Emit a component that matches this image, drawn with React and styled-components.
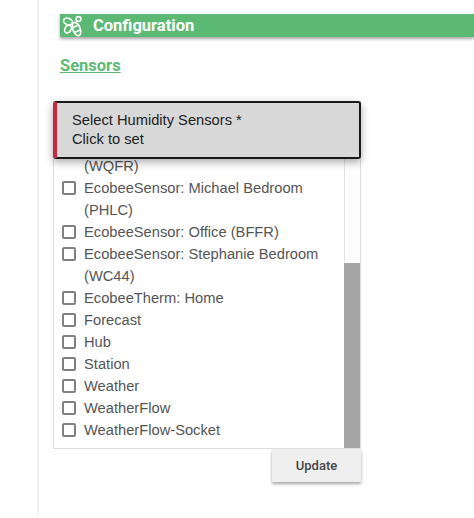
import styled, { createGlobalStyle } from "styled-components";

const GlobalStyle = createGlobalStyle`
    html, body {
        margin: 0;
        padding: 0;
        background: #fff;
    }
    body {
        font-family: "Liberation Sans", Arial, sans-serif;
    }
`;

const Page = styled.div`
    width: 474px;
    height: 518px;
    box-sizing: border-box;
    overflow: hidden;
    display: flex;
`;

const Rail = styled.div`
    width: 37px;
    flex-shrink: 0;
    height: 516px;
    border-right: 2px solid #f1f1f1;
`;

const Main = styled.div`
    flex: 1;
    min-width: 0;
    padding: 14px 0 0 14px;
    display: flex;
    flex-direction: column;
`;

const Header = styled.div`
    height: 23px;
    margin-left: 7px;
    display: flex;
    align-items: center;
    gap: 9px;
    padding-left: 2px;
    background-color: #5cb973;
    box-shadow: rgba(0, 0, 0, 0.35) 0 2px 3px;
    color: #fff;
    font-family: Roboto, sans-serif;
    font-weight: 700;
    font-size: 16.5px;
`;

const SectionLink = styled.a`
    align-self: flex-start;
    margin: 19px 0 0 7px;
    font-family: Roboto, sans-serif;
    font-weight: 700;
    font-size: 16.5px;
    line-height: 20px;
    color: #5cb973;
    text-decoration: underline;
`;

const Select = styled.div`
    position: relative;
    width: 308px;
    margin-top: 25px;
`;

const Trigger = styled.div`
    position: absolute;
    z-index: 2;
    top: 0;
    left: 0;
    right: 0;
    height: 58px;
    box-sizing: border-box;
    padding: 8px 0 0 15px;
    background-color: #d8d8d8;
    border: 2px solid #1a1a1a;
    border-left: 4px solid #c8283f;
    border-radius: 3px;
    box-shadow: rgba(0, 0, 0, 0.35) 0 3px 9px;
    font-size: 14.7px;
    line-height: 19px;
    color: #222;
`;

const List = styled.div`
    height: 348px;
    box-sizing: border-box;
    padding: 54px 0 0 8px;
    border: 1px solid #ddd;
    border-top: none;
    position: relative;
    overflow: hidden;
`;

const Scrollbar = styled.div`
    position: absolute;
    top: 0;
    right: 0;
    bottom: 0;
    width: 15px;
    background-color: #fdfdfd;
    border-left: 1px solid #e4e4e4;
`;

const Thumb = styled.div`
    position: absolute;
    left: -1px;
    right: 0;
    bottom: 0;
    height: 185px;
    background-color: #a6a6a6;
`;

const Row = styled.label`
    display: flex;
    align-items: flex-start;
    gap: 8px;
    font-size: 14.7px;
    line-height: 22px;
    color: #555;
`;

const Box = styled.span`
    width: 14px;
    height: 14px;
    flex-shrink: 0;
    margin-top: 4px;
    box-sizing: border-box;
    border: 2px solid #808080;
    border-radius: 2px;
    visibility: ${({ $hidden }) => ($hidden ? "hidden" : "visible")};
`;

const Label = styled.span`
    width: 250px;
`;

const Footer = styled.div`
    width: 308px;
    display: flex;
    justify-content: flex-end;
`;

const UpdateButton = styled.button`
    width: 89px;
    height: 33px;
    border: none;
    background-color: #efefef;
    box-shadow: rgba(0, 0, 0, 0.35) 0 2px 3px;
    font-family: Roboto, sans-serif;
    font-weight: 500;
    font-size: 13px;
    color: #444;
    padding: 0;
`;

const sensors = [
    { text: "(WQFR)", noBox: true },
    { text: "EcobeeSensor: Michael Bedroom (PHLC)" },
    { text: "EcobeeSensor: Office (BFFR)" },
    { text: "EcobeeSensor: Stephanie Bedroom (WC44)" },
    { text: "EcobeeTherm: Home" },
    { text: "Forecast" },
    { text: "Hub" },
    { text: "Station" },
    { text: "Weather" },
    { text: "WeatherFlow" },
    { text: "WeatherFlow-Socket" },
];

const BeeIcon = () => (
    <svg width="22" height="22" viewBox="0 0 22 22" fill="none" stroke="#fff" strokeWidth="1.6">
        <ellipse cx="14.5" cy="14" rx="3.6" ry="7" transform="rotate(-22 14.5 14)" />
        <ellipse cx="6" cy="6.5" rx="4.6" ry="3.2" transform="rotate(20 6 6.5)" />
        <ellipse cx="6" cy="14" rx="3" ry="4.2" transform="rotate(35 6 14)" />
        <circle cx="16.5" cy="4" r="2.4" />
        <path d="M11 12.5l6.5-3M12.5 17.5l6.5-3" />
    </svg>
);

const App = () => {
    return (
        <Page>
            <GlobalStyle />
            <Rail />
            <Main>
                <Header>
                    <BeeIcon />
                    Configuration
                </Header>
                <SectionLink href="#">Sensors</SectionLink>
                <Select>
                    <Trigger>
                        Select Humidity Sensors *
                        <br />
                        Click to set
                    </Trigger>
                    <List>
                        <Scrollbar>
                            <Thumb />
                        </Scrollbar>
                        {sensors.map((sensor) => (
                            <Row key={sensor.text}>
                                <Box $hidden={sensor.noBox} />
                                <Label>{sensor.text}</Label>
                            </Row>
                        ))}
                    </List>
                </Select>
                <Footer>
                    <UpdateButton>Update</UpdateButton>
                </Footer>
            </Main>
        </Page>
    );
};

export default App;
